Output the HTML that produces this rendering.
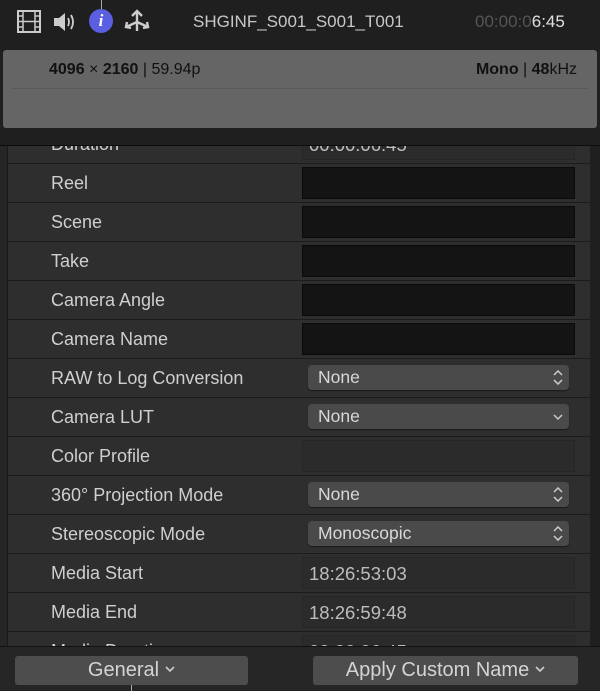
<!DOCTYPE html>
<html><head><style>
*{margin:0;padding:0;box-sizing:border-box}
body{width:600px;height:690px;background:#1f1f1f;font-family:"Liberation Sans",sans-serif;position:relative;overflow:hidden;color:#d0d0d0}
.top{position:absolute;left:0;top:0;width:600px;height:50px;background:#1f1f1f}
.title{position:absolute;left:193px;top:12px;font-size:17px;color:#c8c8c8}
.tc{position:absolute;left:475px;top:12px;font-size:17px;color:#555}
.tc b{color:#e0e0e0;font-weight:normal}
.panel{position:absolute;left:3px;top:50px;width:594px;height:78px;background:#656565;border-radius:3px}
.panel .l{position:absolute;left:46px;top:11px;font-size:16px;color:#111}
.panel .r{position:absolute;right:20px;top:11px;font-size:16px;color:#111}
.panel .line{position:absolute;left:8px;right:8px;top:38px;height:1px;background:#5a5a5a}
.list{position:absolute;left:0;top:145px;width:600px;height:501px;overflow:hidden;background:#1f1f1f;border-top:1px solid #0c0c0c}
.gut{position:absolute;left:0;top:0;width:8px;height:100%;background:#262626;border-right:1px solid #181818}
.rows{position:absolute;left:8px;top:-21px;width:582px}
.row{height:39px;background:#2e2e2e;border-bottom:1px solid #1c1c1c;position:relative}
.row .lab{position:absolute;left:43px;top:9px;font-size:18px;color:#cfcfcf}
.inp{position:absolute;left:294px;top:3px;width:273px;height:32px;background:#141414;border:1px solid #0a0a0a}
.ro{position:absolute;left:294px;top:3px;width:273px;height:32px;background:#2b2b2b;border:1px solid #262626;font-size:18.5px;color:#bdbdbd;padding:5px 0 0 6px}
.pop{position:absolute;left:300px;top:6px;width:261px;height:25px;background:#4a4a4a;border-radius:4px;box-shadow:0 1px 1px #1a1a1a;font-size:17.5px;color:#d8d8d8;padding:2px 0 0 10px}
.pop svg{position:absolute;right:6px;top:5px}
.bot{position:absolute;left:0;top:646px;width:600px;height:44px;background:#262626;border-top:1px solid #111}
.btn{position:absolute;top:9px;height:29px;background:#4d4d4d;border-radius:3px;font-size:20px;color:#d4d4d4;text-align:center;padding-top:3px}
.btn svg{margin-left:6px;vertical-align:3px}
</style></head><body>
<div class="top">
<svg style="position:absolute;left:17px;top:10px" width="24" height="23" viewBox="0 0 24 23"><rect x="1" y="1" width="22" height="21" fill="none" stroke="#ccc" stroke-width="2"/><line x1="6" y1="1" x2="6" y2="22" stroke="#ccc" stroke-width="1.5"/><line x1="18" y1="1" x2="18" y2="22" stroke="#ccc" stroke-width="1.5"/><path d="M1 6h5M1 11.5h5M1 17h5M18 6h5M18 11.5h5M18 17h5M6 11.5h12" stroke="#ccc" stroke-width="1.5"/></svg>
<svg style="position:absolute;left:53px;top:11px" width="25" height="22" viewBox="0 0 25 22"><path d="M1 7h5l6-5v18l-6-5H1z" fill="#ccc"/><path d="M15 7q2 4 0 8M18 4q4 7 0 14" stroke="#ccc" stroke-width="1.8" fill="none"/></svg>
<div style="position:absolute;left:101px;top:0;width:1px;height:10px;background:#aaa"></div>
<div style="position:absolute;left:89px;top:9px;width:24px;height:24px;border-radius:50%;background:#5a5ee0;color:#fff;font:italic bold 17px 'Liberation Serif',serif;text-align:center;line-height:24px">i</div>
<svg style="position:absolute;left:124px;top:9px" width="26" height="25" viewBox="0 0 26 25"><path d="M13 2v20M8 7l5-5 5 5M3 13l-1 5 5 1M23 13l1 5-5 1M2 18l11-5 11 5" stroke="#ccc" stroke-width="2.4" fill="none"/></svg>
<div class="title">SHGINF_S001_S001_T001</div>
<div class="tc">00:00:0<b>6:45</b></div>
</div>
<div class="panel"><div class="l"><b>4096</b> × <b>2160</b> | 59.94p</div><div class="r"><b>Mono</b> | <b>48</b>kHz</div><div class="line"></div></div>
<div class="list"><div class="gut"></div><div class="rows">
<div class="row"><div class="lab">Duration</div><div class="ro">00:00:06:45</div></div>
<div class="row"><div class="lab">Reel</div><div class="inp"></div></div>
<div class="row"><div class="lab">Scene</div><div class="inp"></div></div>
<div class="row"><div class="lab">Take</div><div class="inp"></div></div>
<div class="row"><div class="lab">Camera Angle</div><div class="inp"></div></div>
<div class="row"><div class="lab">Camera Name</div><div class="inp"></div></div>
<div class="row"><div class="lab">RAW to Log Conversion</div><div class="pop">None<svg width="10" height="15" viewBox="0 0 10 15"><path d="M1 5l4-4 4 4M1 10l4 4 4-4" stroke="#ccc" stroke-width="1.5" fill="none"/></svg></div></div>
<div class="row"><div class="lab">Camera LUT</div><div class="pop">None<svg width="10" height="15" viewBox="0 0 10 15"><path d="M1 6l4 4 4-4" stroke="#ccc" stroke-width="1.5" fill="none"/></svg></div></div>
<div class="row"><div class="lab">Color Profile</div><div class="ro"></div></div>
<div class="row"><div class="lab">360° Projection Mode</div><div class="pop">None<svg width="10" height="15" viewBox="0 0 10 15"><path d="M1 5l4-4 4 4M1 10l4 4 4-4" stroke="#ccc" stroke-width="1.5" fill="none"/></svg></div></div>
<div class="row"><div class="lab">Stereoscopic Mode</div><div class="pop">Monoscopic<svg width="10" height="15" viewBox="0 0 10 15"><path d="M1 5l4-4 4 4M1 10l4 4 4-4" stroke="#ccc" stroke-width="1.5" fill="none"/></svg></div></div>
<div class="row"><div class="lab">Media Start</div><div class="ro">18:26:53:03</div></div>
<div class="row"><div class="lab">Media End</div><div class="ro">18:26:59:48</div></div>
<div class="row"><div class="lab">Media Duration</div><div class="ro">00:00:06:45</div></div>
</div></div>
<div class="bot">
<div class="btn" style="left:15px;width:233px">General<svg width="10" height="7" viewBox="0 0 10 7"><path d="M1 1l4 4 4-4" stroke="#ccc" stroke-width="1.6" fill="none"/></svg></div>
<div class="btn" style="left:313px;width:265px">Apply Custom Name<svg width="10" height="7" viewBox="0 0 10 7"><path d="M1 1l4 4 4-4" stroke="#ccc" stroke-width="1.6" fill="none"/></svg></div>
<div style="position:absolute;left:131px;top:38px;width:1px;height:6px;background:#aaa"></div>
</div>
</body></html>
